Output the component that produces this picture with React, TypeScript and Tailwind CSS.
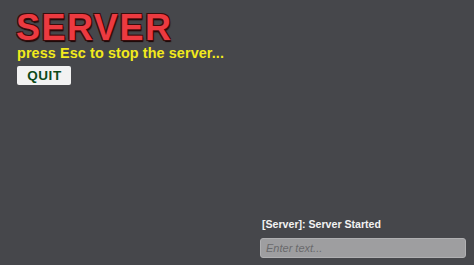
export default function App() {
  return (
    <div
      className="flex h-[265px] w-full flex-col justify-between overflow-hidden bg-[#46474b]"
      style={{ fontFamily: '"Liberation Sans", Arial, sans-serif' }}
    >
      <div className="flex flex-col items-start pl-[16px] pt-[11px]">
        <div className="h-[34px] text-[36px] font-bold leading-[34px] tracking-[1.5px] text-[#ec3a40] [text-shadow:1px_1px_0_#3a0c0c,-1px_-1px_0_#3a0c0c,1px_-1px_0_#3a0c0c,-1px_1px_0_#3a0c0c,1px_2px_1px_#1a0505]">
          SERVER
        </div>
        <div className="ml-[1px] h-[16px] text-[14.4px] font-bold leading-[16px] tracking-[0.1px] text-[#f2ea1c]">
          press Esc to stop the server...
        </div>
        <button className="ml-[1px] mt-[5px] flex h-[19px] w-[54px] items-center justify-center rounded-[2px] bg-[#f2f2f2] pl-[1px] text-[13.5px] font-bold leading-none tracking-[0.6px] text-[#0c4a18]">
          QUIT
        </button>
      </div>
      <div className="flex flex-col items-end pb-[7px] pr-[8px]">
        <div className="flex w-[206px] flex-col">
          <div className="h-[13px] pl-[2px] text-[10.6px] font-bold leading-[13px] text-[#f2f2f2]">
            [Server]: Server Started
          </div>
          <div className="mt-[7px] flex h-[20px] items-center rounded-[3px] border border-[#b0b0b2] bg-[#9e9ea0] pl-[5px] text-[11px] italic text-[#6a6a6c]">
            Enter text...
          </div>
        </div>
      </div>
    </div>
  );
}
